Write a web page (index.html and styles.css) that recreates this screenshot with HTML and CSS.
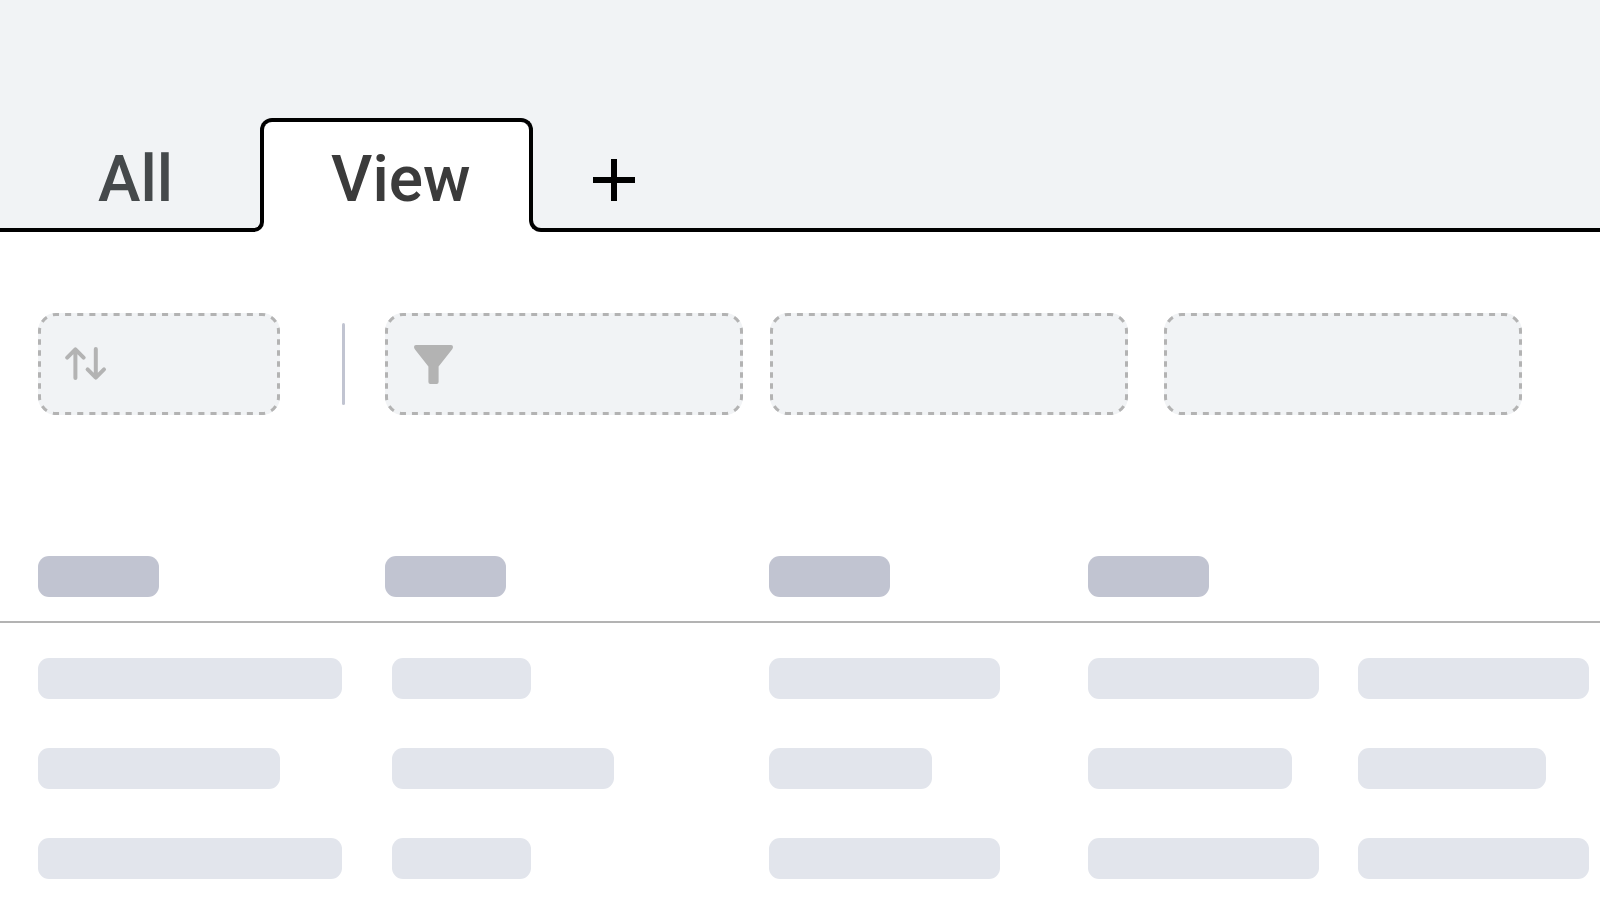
FILE: index.html
```html
<!DOCTYPE html>
<html lang="en">
<head>
  <meta charset="UTF-8">
  <meta name="viewport" content="width=device-width, initial-scale=1.0">
  <title>View</title>
  <link rel="stylesheet" href="styles.css">
</head>
<body>
  <!-- dashed outlines of the chips, a dash sits on every corner -->
  <svg class="defs" width="0" height="0" aria-hidden="true">
    <symbol id="outline-sort" viewBox="0 0 242 102">
      <path pathLength="68" d="M18 1.5H224M18 100.5H224"/>
      <path pathLength="24" d="M1.5 18V84M240.5 18V84"/>
      <path pathLength="16" d="M1.5 18A16.5 16.5 0 0 1 18 1.5M224 1.5A16.5 16.5 0 0 1 240.5 18M240.5 84A16.5 16.5 0 0 1 224 100.5M18 100.5A16.5 16.5 0 0 1 1.5 84"/>
    </symbol>
    <symbol id="outline-filter" viewBox="0 0 358 102">
      <path pathLength="108" d="M18 1.5H340M18 100.5H340"/>
      <path pathLength="24" d="M1.5 18V84M356.5 18V84"/>
      <path pathLength="16" d="M1.5 18A16.5 16.5 0 0 1 18 1.5M340 1.5A16.5 16.5 0 0 1 356.5 18M356.5 84A16.5 16.5 0 0 1 340 100.5M18 100.5A16.5 16.5 0 0 1 1.5 84"/>
    </symbol>
  </svg>

  <nav class="tab-bar" aria-label="Views">
    <button class="tab" type="button">All</button>
    <button class="tab tab-active" type="button" aria-current="page">View</button>
    <button class="add-tab" type="button" aria-label="Add view">
      <svg width="42" height="42" viewBox="0 0 42 42" aria-hidden="true">
        <path d="M21 0v42M0 21h42" stroke="currentColor" stroke-width="6"/>
      </svg>
    </button>
  </nav>

  <main>
    <div class="toolbar">
      <button class="chip chip-sort" type="button" aria-label="Sort">
        <svg class="outline" aria-hidden="true"><use href="#outline-sort"/></svg>
        <svg width="42" height="34" viewBox="0 0 42 34" fill="none" stroke="currentColor" stroke-width="4" stroke-linecap="round" stroke-linejoin="round" aria-hidden="true">
          <path d="M10.4 31V2.4M2.2 10.6l8.2-8.2 8.2 8.2"/>
          <path d="M30.8 2v28.6M22.6 22.4l8.2 8.2 8.2-8.2"/>
        </svg>
      </button>
      <div class="divider"></div>
      <div class="filters">
        <button class="chip chip-filter" type="button" aria-label="Filter">
          <svg class="outline" aria-hidden="true"><use href="#outline-filter"/></svg>
          <svg width="39" height="39" viewBox="0 0 39 39" fill="currentColor" aria-hidden="true">
            <path d="M2 0h35a2 2 0 0 1 2 2c0 1-.4 1.800-1 2.600L24.600 21.400V37a2 2 0 0 1-2 2h-6.200a2 2 0 0 1-2-2V21.400L1 4.600C.4 3.800 0 3 0 2a2 2 0 0 1 2-2z"/>
          </svg>
        </button>
        <button class="chip chip-filter" type="button" aria-label="Filter 2">
          <svg class="outline" aria-hidden="true"><use href="#outline-filter"/></svg>
        </button>
      </div>
      <button class="chip chip-filter" type="button" aria-label="Filter 3">
        <svg class="outline" aria-hidden="true"><use href="#outline-filter"/></svg>
      </button>
    </div>

    <table class="list">
      <colgroup>
        <col class="col-1">
        <col class="col-2">
        <col class="col-3">
        <col class="col-4">
        <col>
      </colgroup>
      <thead>
        <tr>
          <th><div class="bar bar-head"></div></th>
          <th><div class="bar bar-head"></div></th>
          <th><div class="bar bar-head"></div></th>
          <th><div class="bar bar-head"></div></th>
          <th></th>
        </tr>
      </thead>
      <tbody>
        <tr>
          <td><div class="bar bar-xl"></div></td>
          <td><div class="bar bar-xs"></div></td>
          <td><div class="bar bar-lg"></div></td>
          <td><div class="bar bar-lg"></div></td>
          <td><div class="bar bar-lg"></div></td>
        </tr>
        <tr class="row-alt">
          <td><div class="bar"></div></td>
          <td><div class="bar"></div></td>
          <td><div class="bar"></div></td>
          <td><div class="bar"></div></td>
          <td><div class="bar"></div></td>
        </tr>
        <tr>
          <td><div class="bar bar-xl"></div></td>
          <td><div class="bar bar-xs"></div></td>
          <td><div class="bar bar-lg"></div></td>
          <td><div class="bar bar-lg"></div></td>
          <td><div class="bar bar-lg"></div></td>
        </tr>
      </tbody>
    </table>
  </main>
</body>
</html>
```

FILE: styles.css
```css
* {
  box-sizing: border-box;
  margin: 0;
  padding: 0;
}

body {
  font-family: Roboto, sans-serif;
  background-color: #fff;
}

button {
  font: inherit;
  border: none;
  background: none;
  cursor: pointer;
}

.defs {
  position: absolute;
}

/* Tabs */
.tab-bar {
  display: flex;
  align-items: flex-end;
  padding-top: 118px;
  background-color: #f1f3f5;
  box-shadow: inset 0 -4px 0 #000;
}

.tab {
  padding: 20px 87px 14px 98px;
  font-size: 64px;
  font-weight: 500;
  line-height: 76px;
  color: #45494b;
}

.tab-active {
  position: relative;
  padding: 20px 59px 14px 67px;
  border: 4px solid #000;
  border-bottom: none;
  border-radius: 12px 12px 0 0;
  background-color: #fff;
  color: #3b3b3b;
}

/* rounded feet where the tab meets the line */
.tab-active::before,
.tab-active::after {
  content: '';
  position: absolute;
  bottom: 0;
  width: 16px;
  height: 16px;
  border-bottom: 4px solid #000;
  background-color: #f1f3f5;
}

.tab-active::before {
  right: 100%;
  border-right: 4px solid #000;
  border-bottom-right-radius: 10px;
  box-shadow: 4px 4px 0 #fff;
}

.tab-active::after {
  left: 100%;
  border-left: 4px solid #000;
  border-bottom-left-radius: 12px;
  box-shadow: -4px 4px 0 #fff;
}

.add-tab {
  margin: 0 0 31px 60px;
  color: #000;
}

.add-tab svg {
  display: block;
}

/* Sort and filters */
.toolbar {
  display: flex;
  align-items: center;
  padding: 81px 38px 0;
}

.chip {
  position: relative;
  display: flex;
  align-items: center;
  height: 102px;
  border-radius: 18px;
  background-color: #f1f3f5;
  color: #b3b3b3;
}

.chip-sort {
  width: 242px;
  padding-left: 27px;
}

.chip-filter {
  width: 358px;
  padding-left: 29px;
}

.outline {
  position: absolute;
  top: 0;
  left: 0;
  width: 100%;
  height: 100%;
  fill: none;
  stroke: #b3b3b3;
  stroke-width: 3;
  stroke-dasharray: 1 1;
  stroke-dashoffset: 0.5;
}

.divider {
  width: 3px;
  height: 82px;
  margin: 0 40px 0 62px;
  border-radius: 2px;
  background-color: #c1c4d1;
}

.filters {
  display: flex;
  gap: 27px;
  margin-right: 36px;
}

/* Placeholder list */
.list {
  width: 100%;
  margin-top: 141px;
  table-layout: fixed;
  border-collapse: separate;
  border-spacing: 0;
}

.col-1 {
  width: 385px;
}

.col-2 {
  width: 384px;
}

.col-3 {
  width: 319px;
}

.col-4 {
  width: 270px;
}

.list th {
  padding-bottom: 24px;
  border-bottom: 2px solid #b3b3b3;
}

.list td {
  padding: 35px 0 14px;
}

.list th:first-child,
.list td:first-child {
  padding-left: 38px;
}

.list td:nth-child(2) {
  padding-left: 7px;
}

.bar {
  height: 41px;
  border-radius: 11px;
  background-color: #e2e5ec;
}

.bar-head {
  width: 121px;
  background-color: #c1c4d1;
}

.bar-xs {
  width: 139px;
}

.bar-lg {
  width: 231px;
}

.bar-xl {
  width: 304px;
}

.row-alt td:nth-child(1) .bar {
  width: 242px;
}

.row-alt td:nth-child(2) .bar {
  width: 222px;
}

.row-alt td:nth-child(3) .bar {
  width: 163px;
}

.row-alt td:nth-child(4) .bar {
  width: 204px;
}

.row-alt td:nth-child(5) .bar {
  width: 188px;
}
```
